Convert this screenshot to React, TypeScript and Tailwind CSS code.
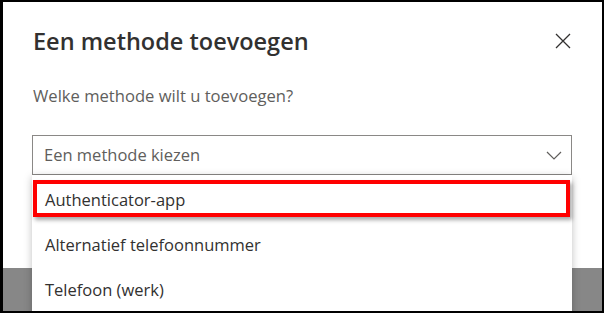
const OPTIONS = ["Authenticator-app", "Alternatief telefoonnummer", "Telefoon (werk)"];

function CloseIcon() {
  return (
    <svg width="16" height="16" viewBox="0 0 16 16" className="text-[#323130]">
      <path d="M1 1 L15 15 M15 1 L1 15" stroke="currentColor" strokeWidth="1.3" fill="none" />
    </svg>
  );
}

function ChevronDown() {
  return (
    <svg width="16" height="9" viewBox="0 0 16 9" className="text-[#605e5c]">
      <path d="M1 1 L8 8 L15 1" stroke="currentColor" strokeWidth="1.2" fill="none" />
    </svg>
  );
}

export default function App() {
  return (
    <div
      className="w-[604px] h-[313px] bg-black pt-[2px] pl-[3px] pr-[2px] pb-[2px]"
      style={{ fontFamily: '"Open Sans", "Noto Sans", sans-serif' }}
    >
      <div className="relative h-full flex flex-col overflow-hidden">
        {/* Dialog */}
        <div className="bg-white h-[266px] pl-[30px] pr-[31px] pt-[23px]">
          <div className="flex items-center justify-between h-8">
            <h1 className="text-[23.5px] font-semibold text-[#323130] leading-8">Een methode toevoegen</h1>
            <CloseIcon />
          </div>
          <p className="mt-[27px] text-[16.6px] leading-6 text-[#605e5c]">Welke methode wilt u toevoegen?</p>
          <div className="mt-[27px] -ml-[1px] w-[540px] h-10 border border-[#8a8886] flex items-center justify-between pl-[11px] pr-[9px]">
            <span className="text-[16.5px] text-[#605e5c]">Een methode kiezen</span>
            <ChevronDown />
          </div>
        </div>
        {/* Overlay below dialog */}
        <div className="flex-1 bg-[#878787]" />

        {/* Open dropdown list */}
        <div className="absolute left-[29px] top-[173px] w-[540px] h-[200px] bg-white pt-[3px] shadow-[0_2px_8px_rgba(0,0,0,0.25)]">
          {OPTIONS.map((o) => (
            <div key={o} className="h-[45px] flex items-center pl-[13px] text-[16.5px] text-[#323130]">
              {o}
            </div>
          ))}
          {/* Red highlight annotation */}
          <div className="absolute left-[1px] top-[5px] w-[537px] h-[37px] border-4 border-[#ff0000] shadow-[2px_3px_4px_rgba(0,0,0,0.35)]" />
        </div>
      </div>
    </div>
  );
}
